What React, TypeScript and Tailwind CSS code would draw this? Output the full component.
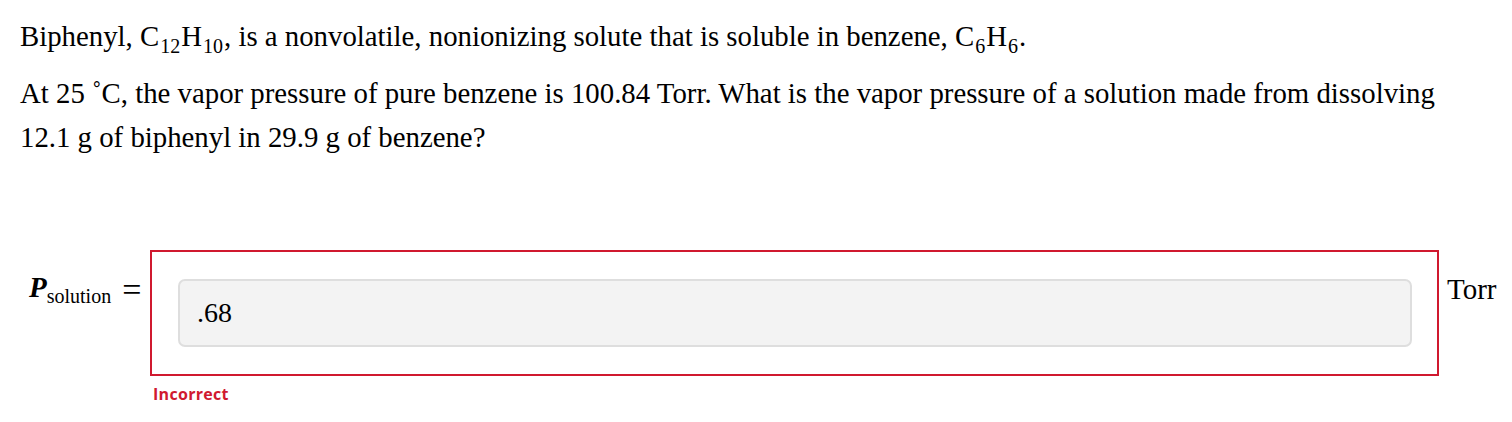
import React from "react";

// Small helper for chemistry subscripts (C12H10 etc.)
function Sub({ children }: { children: React.ReactNode }) {
  return (
    <span className="relative top-[7px] px-[1px] text-[20px] leading-none">
      {children}
    </span>
  );
}

export default function App() {
  return (
    <div className="min-h-[422px] w-[1512px] bg-white text-black font-['Liberation_Serif','Times_New_Roman',serif]">
      <div className="pl-[20px] pr-[60px] pt-[14px] text-[28.8px] leading-[44px]">
        <p className="mb-[13px]">
          Biphenyl, C<Sub>12</Sub>H<Sub>10</Sub>, is a nonvolatile, nonionizing
          solute that is soluble in benzene, C<Sub>6</Sub>H<Sub>6</Sub>.
        </p>
        <p>
          At 25 ˚C, the vapor pressure of pure benzene is 100.84 Torr. What is
          the vapor pressure of a solution made from dissolving 12.1 g of
          biphenyl in 29.9 g of benzene?
        </p>
      </div>

      {/* Answer row */}
      <div className="mt-[91px] flex items-start">
        <div className="flex w-[150px] items-baseline pl-[29px] pt-[20px] text-[29px] leading-[32px]">
          <span className="font-bold italic">P</span>
          <span className="relative top-[6px] text-[20px] leading-none">
            solution
          </span>
          <span className="relative top-[4px] ml-[11px] text-[34px]">=</span>
        </div>

        <div className="flex flex-col">
          <div className="h-[126px] w-[1289px] border-2 border-[#d0192f] pb-[27px] pl-[26px] pr-[25px] pt-[27px]">
            <div className="flex h-[68px] items-center rounded-[7px] border-2 border-[#dedede] bg-[#f3f3f3] pl-[17px] text-[28px]">
              .68
            </div>
          </div>
          <span className="ml-[3px] mt-[7px] font-['Open_Sans',sans-serif] text-[16px] font-bold leading-[22px] tracking-[0.3px] text-[#d0192f]">
            Incorrect
          </span>
        </div>

        <div className="ml-[8px] pt-[23px] text-[29px] leading-[32px]">
          Torr
        </div>
      </div>
    </div>
  );
}
